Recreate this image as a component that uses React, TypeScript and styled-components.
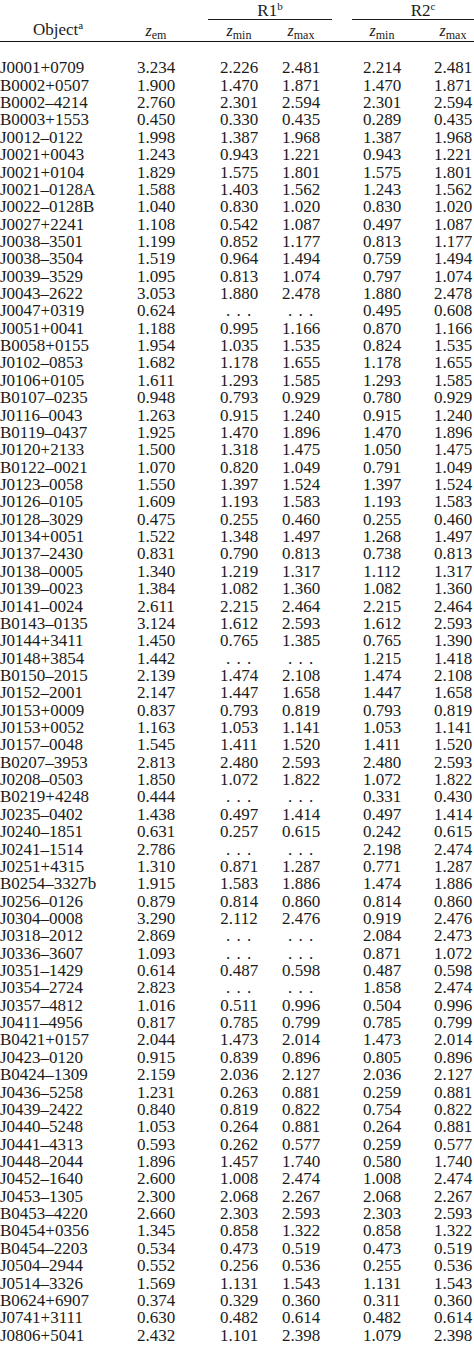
import React from 'react';
import styled, { createGlobalStyle } from 'styled-components';

// Redshift ranges table (R1 / R2 search windows)
type Row = [string, string, string | null, string | null, string, string];

const rows: Row[] = [
  ['J0001+0709', '3.234', '2.226', '2.481', '2.214', '2.481'],
  ['B0002+0507', '1.900', '1.470', '1.871', '1.470', '1.871'],
  ['B0002–4214', '2.760', '2.301', '2.594', '2.301', '2.594'],
  ['B0003+1553', '0.450', '0.330', '0.435', '0.289', '0.435'],
  ['J0012–0122', '1.998', '1.387', '1.968', '1.387', '1.968'],
  ['J0021+0043', '1.243', '0.943', '1.221', '0.943', '1.221'],
  ['J0021+0104', '1.829', '1.575', '1.801', '1.575', '1.801'],
  ['J0021–0128A', '1.588', '1.403', '1.562', '1.243', '1.562'],
  ['J0022–0128B', '1.040', '0.830', '1.020', '0.830', '1.020'],
  ['J0027+2241', '1.108', '0.542', '1.087', '0.497', '1.087'],
  ['J0038–3501', '1.199', '0.852', '1.177', '0.813', '1.177'],
  ['J0038–3504', '1.519', '0.964', '1.494', '0.759', '1.494'],
  ['J0039–3529', '1.095', '0.813', '1.074', '0.797', '1.074'],
  ['J0043–2622', '3.053', '1.880', '2.478', '1.880', '2.478'],
  ['J0047+0319', '0.624', null, null, '0.495', '0.608'],
  ['J0051+0041', '1.188', '0.995', '1.166', '0.870', '1.166'],
  ['B0058+0155', '1.954', '1.035', '1.535', '0.824', '1.535'],
  ['J0102–0853', '1.682', '1.178', '1.655', '1.178', '1.655'],
  ['J0106+0105', '1.611', '1.293', '1.585', '1.293', '1.585'],
  ['B0107–0235', '0.948', '0.793', '0.929', '0.780', '0.929'],
  ['J0116–0043', '1.263', '0.915', '1.240', '0.915', '1.240'],
  ['B0119–0437', '1.925', '1.470', '1.896', '1.470', '1.896'],
  ['J0120+2133', '1.500', '1.318', '1.475', '1.050', '1.475'],
  ['B0122–0021', '1.070', '0.820', '1.049', '0.791', '1.049'],
  ['J0123–0058', '1.550', '1.397', '1.524', '1.397', '1.524'],
  ['J0126–0105', '1.609', '1.193', '1.583', '1.193', '1.583'],
  ['J0128–3029', '0.475', '0.255', '0.460', '0.255', '0.460'],
  ['J0134+0051', '1.522', '1.348', '1.497', '1.268', '1.497'],
  ['J0137–2430', '0.831', '0.790', '0.813', '0.738', '0.813'],
  ['J0138–0005', '1.340', '1.219', '1.317', '1.112', '1.317'],
  ['J0139–0023', '1.384', '1.082', '1.360', '1.082', '1.360'],
  ['J0141–0024', '2.611', '2.215', '2.464', '2.215', '2.464'],
  ['B0143–0135', '3.124', '1.612', '2.593', '1.612', '2.593'],
  ['J0144+3411', '1.450', '0.765', '1.385', '0.765', '1.390'],
  ['J0148+3854', '1.442', null, null, '1.215', '1.418'],
  ['B0150–2015', '2.139', '1.474', '2.108', '1.474', '2.108'],
  ['J0152–2001', '2.147', '1.447', '1.658', '1.447', '1.658'],
  ['J0153+0009', '0.837', '0.793', '0.819', '0.793', '0.819'],
  ['J0153+0052', '1.163', '1.053', '1.141', '1.053', '1.141'],
  ['J0157–0048', '1.545', '1.411', '1.520', '1.411', '1.520'],
  ['B0207–3953', '2.813', '2.480', '2.593', '2.480', '2.593'],
  ['J0208–0503', '1.850', '1.072', '1.822', '1.072', '1.822'],
  ['B0219+4248', '0.444', null, null, '0.331', '0.430'],
  ['J0235–0402', '1.438', '0.497', '1.414', '0.497', '1.414'],
  ['J0240–1851', '0.631', '0.257', '0.615', '0.242', '0.615'],
  ['J0241–1514', '2.786', null, null, '2.198', '2.474'],
  ['J0251+4315', '1.310', '0.871', '1.287', '0.771', '1.287'],
  ['B0254–3327b', '1.915', '1.583', '1.886', '1.474', '1.886'],
  ['J0256–0126', '0.879', '0.814', '0.860', '0.814', '0.860'],
  ['J0304–0008', '3.290', '2.112', '2.476', '0.919', '2.476'],
  ['J0318–2012', '2.869', null, null, '2.084', '2.473'],
  ['J0336–3607', '1.093', null, null, '0.871', '1.072'],
  ['J0351–1429', '0.614', '0.487', '0.598', '0.487', '0.598'],
  ['J0354–2724', '2.823', null, null, '1.858', '2.474'],
  ['J0357–4812', '1.016', '0.511', '0.996', '0.504', '0.996'],
  ['J0411–4956', '0.817', '0.785', '0.799', '0.785', '0.799'],
  ['B0421+0157', '2.044', '1.473', '2.014', '1.473', '2.014'],
  ['J0423–0120', '0.915', '0.839', '0.896', '0.805', '0.896'],
  ['B0424–1309', '2.159', '2.036', '2.127', '2.036', '2.127'],
  ['J0436–5258', '1.231', '0.263', '0.881', '0.259', '0.881'],
  ['J0439–2422', '0.840', '0.819', '0.822', '0.754', '0.822'],
  ['J0440–5248', '1.053', '0.264', '0.881', '0.264', '0.881'],
  ['J0441–4313', '0.593', '0.262', '0.577', '0.259', '0.577'],
  ['J0448–2044', '1.896', '1.457', '1.740', '0.580', '1.740'],
  ['J0452–1640', '2.600', '1.008', '2.474', '1.008', '2.474'],
  ['J0453–1305', '2.300', '2.068', '2.267', '2.068', '2.267'],
  ['B0453–4220', '2.660', '2.303', '2.593', '2.303', '2.593'],
  ['B0454+0356', '1.345', '0.858', '1.322', '0.858', '1.322'],
  ['B0454–2203', '0.534', '0.473', '0.519', '0.473', '0.519'],
  ['J0504–2944', '0.552', '0.256', '0.536', '0.255', '0.536'],
  ['J0514–3326', '1.569', '1.131', '1.543', '1.131', '1.543'],
  ['B0624+6907', '0.374', '0.329', '0.360', '0.311', '0.360'],
  ['J0741+3111', '0.630', '0.482', '0.614', '0.482', '0.614'],
  ['J0806+5041', '2.432', '1.101', '2.398', '1.079', '2.398'],
];

// column widths, left to right: object, z_em, gap, R1 min, R1 max, gap, R2 min, R2 max
const colWidths = [116, 80, 12, 62, 62, 20, 60, 82];

const GlobalStyle = createGlobalStyle`
  html, body {
    margin: 0;
    padding: 0;
    background: #fff;
    overflow: hidden;
  }
`;

const Page = styled.div`
  width: 474px;
  height: 1345px;
  overflow: hidden;
  background: #fff;
`;

const Table = styled.table`
  width: 494px;
  table-layout: fixed;
  border-collapse: collapse;
  font-family: 'Liberation Serif', 'Times New Roman', serif;
  font-size: 17px;
  color: #1b1b1b;
  line-height: 17.36px;

  th {
    font-weight: normal;
    padding: 0;
    text-align: center;
    white-space: nowrap;
  }
  td {
    padding: 0;
    text-align: center;
    white-space: nowrap;
    height: 17.36px;
  }
`;

const Col = styled.col<{ $w: number }>`
  width: ${({ $w }) => $w}px;
`;

const GroupRow = styled.tr`
  th {
    height: 16px;
    vertical-align: top;
    padding-top: 2px;
  }
`;

const GroupHead = styled.th`
  border-bottom: 1px solid #1b1b1b;
`;

const SubRow = styled.tr`
  th {
    height: 21px;
    vertical-align: middle;
    border-bottom: 1.6px solid #111;
  }
`;

const ObjectHead = styled.th`
  && {
    vertical-align: bottom;
    padding-bottom: 3px;
    border-bottom: 1.6px solid #111;
  }
`;

const Sup = styled.sup`
  font-size: 11px;
  line-height: 0;
  vertical-align: 6px;
`;

const Z = styled.span`
  font-style: italic;
  font-size: 16px;
`;

const Sub = styled.sub`
  font-size: 12px;
  line-height: 0;
  vertical-align: -3px;
`;

const Spacer = styled.tr`
  td { height: 17px; }
`;

const NameCell = styled.td`
  && { text-align: left; }
`;

const Dots = styled.span`
  letter-spacing: 1px;
`;

const ZHead = ({ sub }: { sub: string }) => (
  <>
    <Z>z</Z>
    <Sub>{sub}</Sub>
  </>
);

const Value = ({ v }: { v: string | null }) =>
  v === null ? <Dots>. . .</Dots> : <>{v}</>;

export default function App() {
  return (
    <Page>
      <GlobalStyle />
      <Table>
        <colgroup>
          {colWidths.map((w, i) => (
            <Col key={i} $w={w} />
          ))}
        </colgroup>
        <thead>
          <GroupRow>
            <ObjectHead rowSpan={2}>
              Object<Sup>a</Sup>
            </ObjectHead>
            <th />
            <th />
            <GroupHead colSpan={2}>
              R1<Sup>b</Sup>
            </GroupHead>
            <th />
            <GroupHead colSpan={2}>
              R2<Sup>c</Sup>
            </GroupHead>
          </GroupRow>
          <SubRow>
            <th>
              <ZHead sub="em" />
            </th>
            <th />
            <th>
              <ZHead sub="min" />
            </th>
            <th>
              <ZHead sub="max" />
            </th>
            <th />
            <th>
              <ZHead sub="min" />
            </th>
            <th>
              <ZHead sub="max" />
            </th>
          </SubRow>
        </thead>
        <tbody>
          <Spacer>
            <td colSpan={8} />
          </Spacer>
          {rows.map((r) => (
            <tr key={r[0]}>
              <NameCell>{r[0]}</NameCell>
              <td>{r[1]}</td>
              <td />
              <td>
                <Value v={r[2]} />
              </td>
              <td>
                <Value v={r[3]} />
              </td>
              <td />
              <td>{r[4]}</td>
              <td>{r[5]}</td>
            </tr>
          ))}
        </tbody>
      </Table>
    </Page>
  );
}
